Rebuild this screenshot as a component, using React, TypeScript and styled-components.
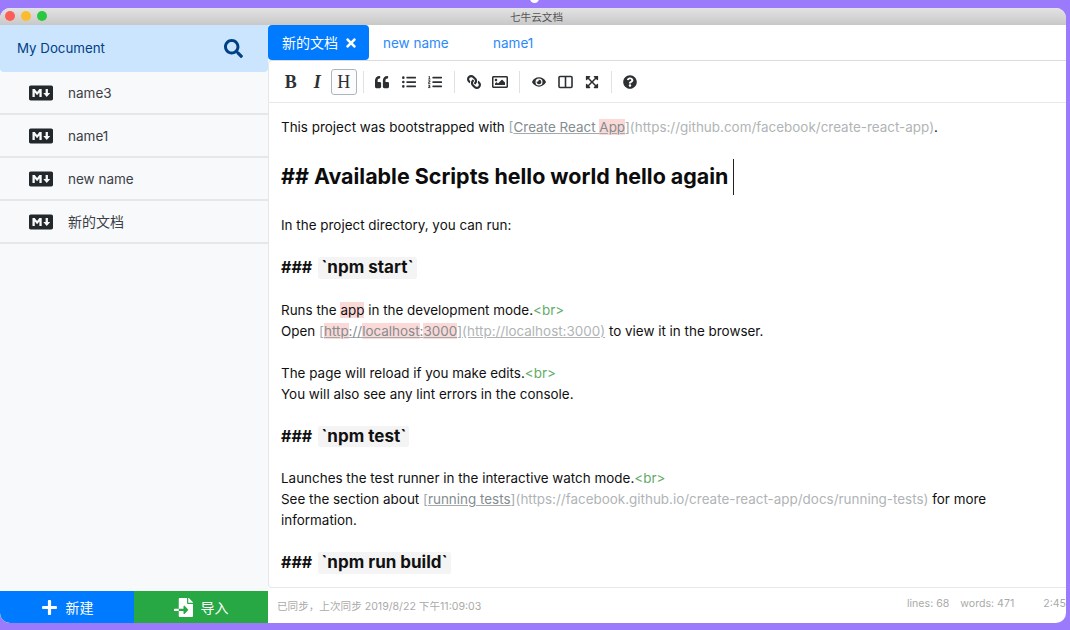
import React from 'react';
import styled, {createGlobalStyle} from 'styled-components';
import {
  FaEye, FaExpandArrowsAlt, FaFileImport, FaLink, FaListOl, FaListUl,
  FaMarkdown, FaPlus, FaQuestionCircle, FaQuoteLeft, FaRegImage, FaSearch, FaTimes,
} from 'react-icons/fa';

const GlobalStyle = createGlobalStyle`
  html, body {
    margin: 0;
    height: 100%;
    overflow: hidden;
    background: #9b7bfb;
  }
  body {
    font-family: Inter, "Noto Sans CJK SC", sans-serif;
  }
`;

const Page = styled.div`
  position: relative;
  width: 1070px;
  height: 630px;
  padding: 8px 4px 7px 0;
  box-sizing: border-box;
  background: #9b7bfb;
`;

const Notch = styled.div`
  position: absolute;
  left: 530px;
  top: -6px;
  width: 9px;
  height: 9px;
  border-radius: 50%;
  background: #fff;
`;

const Window = styled.div`
  display: flex;
  flex-direction: column;
  height: 100%;
  border-radius: 10px;
  overflow: hidden;
  background: #fff;
`;

const TitleBar = styled.div`
  position: relative;
  flex: 0 0 17px;
  display: flex;
  align-items: center;
  justify-content: center;
  padding-left: 7px;
  background: linear-gradient(180deg, #e4e3e3, #c9c8c8);
  font-size: 10.6px;
  color: #555;
`;

const Lights = styled.div`
  position: absolute;
  left: 5px;
  top: 3px;
  display: flex;
  gap: 6px;
`;

const Light = styled.span<{$color: string}>`
  width: 10px;
  height: 10px;
  border-radius: 50%;
  background: ${p => p.$color};
`;

const Body = styled.div`
  flex: 1;
  display: grid;
  grid-template-columns: 268px 1fr;
  min-height: 0;
`;

const Sidebar = styled.aside`
  display: flex;
  flex-direction: column;
  background: #f8f9fa;
`;

const SearchHeader = styled.div`
  flex: 0 0 47px;
  display: flex;
  align-items: center;
  justify-content: space-between;
  box-sizing: border-box;
  padding: 0 25px 1px 17px;
  background: #cce5ff;
  border-radius: 0 0 4px 4px;
  color: #004085;
  font-size: 13.3px;
`;

const FileList = styled.ul`
  flex: 1;
  margin: 0;
  padding: 0;
  list-style: none;
`;

const FileRow = styled.li`
  display: flex;
  align-items: center;
  height: 41px;
  padding-left: 29px;
  gap: 15px;
  border-bottom: 2px solid #e6e7e8;
  font-size: 13.5px;
  color: #3b4046;
`;

const Cjk = styled.span`
  margin-bottom: 2px;
  font-size: 14px;
`;

const ActionBar = styled.div`
  flex: 0 0 32px;
  display: grid;
  grid-template-columns: 134px 134px;
`;

const ActionButton = styled.button<{$color: string}>`
  display: flex;
  align-items: center;
  justify-content: center;
  gap: 8px;
  padding: 0;
  border: 0;
  color: #fff;
  font: inherit;
  font-size: 14px;
  background: ${p => p.$color};
`;

const Main = styled.main`
  display: flex;
  flex-direction: column;
  min-width: 0;
`;

const Tabs = styled.div`
  flex: 0 0 35px;
  display: flex;
  align-items: stretch;
`;

const Tab = styled.div<{$active?: boolean; $width: number}>`
  display: flex;
  align-items: center;
  gap: 6px;
  width: ${p => p.$width}px;
  padding-left: 14px;
  box-sizing: border-box;
  border-radius: ${p => (p.$active ? '4px' : '0')};
  font-size: ${p => (p.$active ? '14px' : '13.5px')};
  color: ${p => (p.$active ? '#fff' : '#2a8afb')};
  background: ${p => (p.$active ? '#007bff' : 'transparent')};
`;

const Toolbar = styled.div`
  flex: 0 0 43px;
  display: flex;
  align-items: center;
  padding-left: 8.6px;
  border-top: 1px solid #dcdcdc;
  border-left: 1px solid #e6e6e6;
  border-bottom: 1px solid #e8e8e8;
  border-top-left-radius: 4px;
  color: #2c3033;
  box-sizing: border-box;
`;

const ToolButton = styled.span<{$active?: boolean}>`
  display: flex;
  align-items: center;
  justify-content: center;
  width: 26.5px;
  height: 26px;
  box-sizing: border-box;
  border: 1px solid ${p => (p.$active ? '#a9b8c0' : 'transparent')};
  border-radius: 3px;
  background: ${p => (p.$active ? '#fcfcfc' : 'transparent')};
  font-size: 14px;
`;

const Glyph = styled.span<{$bold?: boolean; $italic?: boolean}>`
  font-family: "Liberation Serif", serif;
  font-size: 18px;
  line-height: 1;
  font-weight: ${p => (p.$bold ? 700 : 400)};
  font-style: ${p => (p.$italic ? 'italic' : 'normal')};
`;

const MirroredLink = styled(FaLink)`
  transform: scaleX(-1);
`;

const Separator = styled.i`
  width: 1px;
  height: 22px;
  margin: 0 5.5px;
  background: #dfe1e2;
`;

const Editor = styled.div`
  flex: 1;
  min-height: 0;
  overflow: hidden;
  padding: 14px 12px 0 12px;
  border-left: 1px solid #e6e6e6;
  border-bottom: 1px solid #e8e8e8;
  border-bottom-left-radius: 4px;
  font-size: 13.45px;
  line-height: 21px;
  color: #111;
`;

const Line = styled.div`
  min-height: 21px;
`;

const H2 = styled.div`
  display: flex;
  align-items: center;
  box-sizing: border-box;
  height: 35px;
  font-size: 21.45px;
  font-weight: 700;
  color: #0c0c0c;
`;

const H3 = styled.div`
  height: 21.6px;
  line-height: 21.6px;
  font-size: 16px;
  font-weight: 700;
`;

const Cursor = styled.span`
  width: 1px;
  height: 36px;
  margin-left: 5px;
  background: #222;
`;

const Code = styled.span`
  display: inline-block;
  margin-left: 6px;
  padding: 0 3px;
  font-size: 17px;
  background: rgba(0, 0, 0, 0.045);
  border-radius: 2px;
`;

const LinkText = styled.span`
  color: #848c90;
  text-decoration: underline;
  text-decoration-color: #a2aaad;
`;

const Bracket = styled.span`
  color: #a2aaad;
`;

const Url = styled.span<{$underline?: boolean}>`
  color: #b0b4b6;
  text-decoration: ${p => (p.$underline ? 'underline' : 'none')};
`;

const Mark = styled.span`
  background: #fbd9d7;
`;

const Tag = styled.span`
  color: #62ab67;
`;

const StatusBar = styled.div`
  flex: 0 0 35px;
  display: flex;
  align-items: center;
  padding-left: 9px;
  font-size: 10.6px;
  color: #aaa;
  white-space: nowrap;
  overflow: hidden;
`;

const StatusRight = styled.div`
  display: flex;
  margin-left: auto;
  margin-bottom: 4px;
`;

const StatusItem = styled.span<{$gap: number}>`
  margin-left: ${p => p.$gap}px;
`;

const ColumnsIcon = () => (
  <svg width="15" height="14" viewBox="0 0 15 14" fill="none" stroke="currentColor" strokeWidth="1.6">
    <rect x="1" y="1.5" width="13" height="11" rx="1"/>
    <line x1="7.5" y1="1.5" x2="7.5" y2="12.5"/>
  </svg>
);

const files = ['name3', 'name1', 'new name'];

const App = () => {
  return (
    <Page>
      <GlobalStyle/>
      <Notch/>
      <Window>
        <TitleBar>
          <Lights>
            <Light $color="#fc5f57"/>
            <Light $color="#fdbc2e"/>
            <Light $color="#2ac840"/>
          </Lights>
          七牛云文档
        </TitleBar>
        <Body>
          <Sidebar>
            <SearchHeader>
              My Document
              <FaSearch size={19}/>
            </SearchHeader>
            <FileList>
              {files.map(name => (
                <FileRow key={name}>
                  <FaMarkdown size={24} color="#23282c"/>
                  {name}
                </FileRow>
              ))}
              <FileRow>
                <FaMarkdown size={24} color="#23282c"/>
                <Cjk>新的文档</Cjk>
              </FileRow>
            </FileList>
            <ActionBar>
              <ActionButton $color="#007bff"><FaPlus size={17}/>新建</ActionButton>
              <ActionButton $color="#28a745"><FaFileImport size={19}/>导入</ActionButton>
            </ActionBar>
          </Sidebar>
          <Main>
            <Tabs>
              <Tab $active $width={101}><Cjk>新的文档</Cjk><FaTimes size={14}/></Tab>
              <Tab $width={110}>new name</Tab>
              <Tab $width={100}>name1</Tab>
            </Tabs>
            <Toolbar>
              <ToolButton><Glyph $bold>B</Glyph></ToolButton>
              <ToolButton><Glyph $bold $italic>I</Glyph></ToolButton>
              <ToolButton $active><Glyph>H</Glyph></ToolButton>
              <Separator/>
              <ToolButton><FaQuoteLeft/></ToolButton>
              <ToolButton><FaListUl/></ToolButton>
              <ToolButton><FaListOl/></ToolButton>
              <Separator/>
              <ToolButton><MirroredLink/></ToolButton>
              <ToolButton><FaRegImage size={16}/></ToolButton>
              <Separator/>
              <ToolButton><FaEye/></ToolButton>
              <ToolButton><ColumnsIcon/></ToolButton>
              <ToolButton><FaExpandArrowsAlt/></ToolButton>
              <Separator/>
              <ToolButton><FaQuestionCircle/></ToolButton>
            </Toolbar>
            <Editor>
              <Line>
                This project was bootstrapped with <Bracket>[</Bracket><LinkText>Create React <Mark>App</Mark></LinkText><Bracket>]</Bracket>
                <Url>(https://github.com/facebook/create-react-app)</Url>.
              </Line>
              <Line/>
              <H2>## Available Scripts hello world hello again<Cursor/></H2>
              <Line/>
              <Line>In the project directory, you can run:</Line>
              <Line/>
              <H3>###<Code>`npm start`</Code></H3>
              <Line/>
              <Line>Runs the <Mark>app</Mark> in the development mode.<Tag>&lt;br&gt;</Tag></Line>
              <Line>
                Open <Bracket>[</Bracket><LinkText><Mark>http</Mark>://<Mark>localhost</Mark>:<Mark>3000</Mark></LinkText><Bracket>]</Bracket>
                <Url $underline>(http://localhost:3000)</Url> to view it in the browser.
              </Line>
              <Line/>
              <Line>The page will reload if you make edits.<Tag>&lt;br&gt;</Tag></Line>
              <Line>You will also see any lint errors in the console.</Line>
              <Line/>
              <H3>###<Code>`npm test`</Code></H3>
              <Line/>
              <Line>Launches the test runner in the interactive watch mode.<Tag>&lt;br&gt;</Tag></Line>
              <Line>
                See the section about <Bracket>[</Bracket><LinkText>running tests</LinkText><Bracket>]</Bracket>
                <Url>(https://facebook.github.io/create-react-app/docs/running-tests)</Url> for more
              </Line>
              <Line>information.</Line>
              <Line/>
              <H3>###<Code>`npm run build`</Code></H3>
            </Editor>
            <StatusBar>
              已同步，上次同步 2019/8/22 下午11:09:03
              <StatusRight>
                <StatusItem $gap={0}>lines: 68</StatusItem>
                <StatusItem $gap={11}>words: 471</StatusItem>
                <StatusItem $gap={29}>2:45</StatusItem>
              </StatusRight>
            </StatusBar>
          </Main>
        </Body>
      </Window>
    </Page>
  );
};

export default App;
